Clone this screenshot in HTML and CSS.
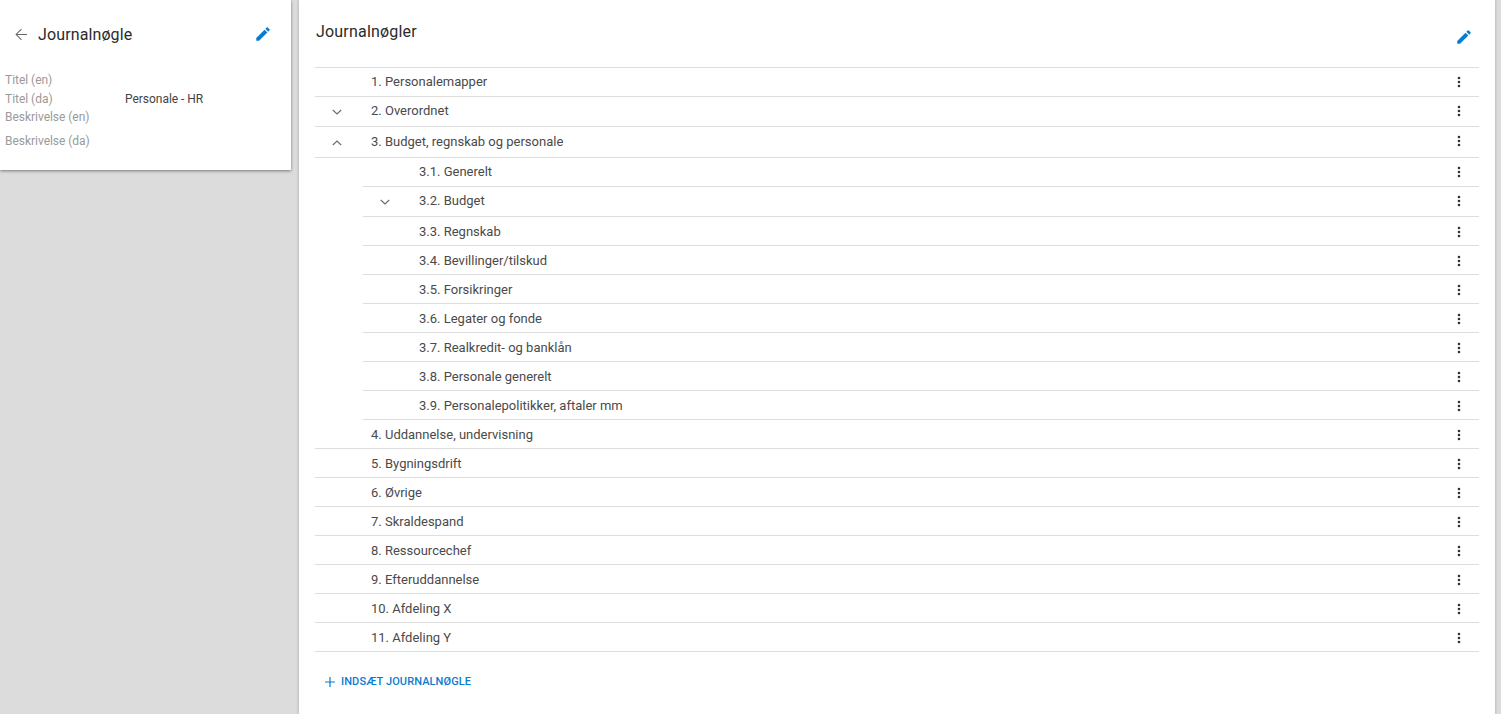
FILE: index.html
```html
<!DOCTYPE html>
<html lang="en">
<head>
  <meta charset="UTF-8">
  <title>Journalnøgler</title>
  <link rel="stylesheet" href="styles.css">
</head>
<body>
<svg class="defs" width="0" height="0">
  <symbol id="edit" viewBox="0 0 24 24"><path d="M3 17.25V21h3.75L17.81 9.94l-3.75-3.75L3 17.25zM20.71 7.04a1 1 0 0 0 0-1.41l-2.34-2.34a1 1 0 0 0-1.41 0l-1.83 1.83 3.75 3.75 1.83-1.83z"/></symbol>
  <symbol id="more" viewBox="0 0 24 24"><path d="M12 8a2 2 0 1 0 0-4 2 2 0 0 0 0 4zm0 2a2 2 0 1 0 0 4 2 2 0 0 0 0-4zm0 6a2 2 0 1 0 0 4 2 2 0 0 0 0-4z"/></symbol>
  <symbol id="down" viewBox="0 0 10 6"><path d="M.8 1l4.2 4 4.2-4" fill="none" stroke="currentColor" stroke-width="1.15"/></symbol>
  <symbol id="up" viewBox="0 0 10 6"><path d="M.8 5l4.2-4 4.2 4" fill="none" stroke="currentColor" stroke-width="1.15"/></symbol>
</svg>

<div class="layout">
  <aside class="side">
    <div class="side-head">
      <svg class="back" viewBox="0 0 14 14"><path d="M13 7H1.5M7 1.2L1.2 7 7 12.8" fill="none" stroke="currentColor" stroke-width="1.1"/></svg>
      <h2>Journalnøgle</h2>
      <svg class="edit"><use href="#edit"/></svg>
    </div>
    <dl class="props">
      <div class="prop"><dt>Titel (en)</dt><dd></dd></div>
      <div class="prop"><dt>Titel (da)</dt><dd>Personale - HR</dd></div>
      <div class="prop"><dt>Beskrivelse (en)</dt><dd></dd></div>
      <div class="prop prop-last"><dt>Beskrivelse (da)</dt><dd></dd></div>
    </dl>
  </aside>

  <main class="main">
    <div class="main-head">
      <h1>Journalnøgler</h1>
      <svg class="edit"><use href="#edit"/></svg>
    </div>

    <div class="tree">
      <div class="row"><span class="toggle"></span><span class="label">1. Personalemapper</span><svg class="more"><use href="#more"/></svg></div>
      <div class="row row-30"><span class="toggle"><svg class="chev"><use href="#down"/></svg></span><span class="label">2. Overordnet</span><svg class="more"><use href="#more"/></svg></div>
      <div class="row row-31"><span class="toggle"><svg class="chev"><use href="#up"/></svg></span><span class="label">3. Budget, regnskab og personale</span><svg class="more"><use href="#more"/></svg></div>
      <div class="sub">
        <div class="row"><span class="toggle"></span><span class="label">3.1. Generelt</span><svg class="more"><use href="#more"/></svg></div>
        <div class="row row-30"><span class="toggle"><svg class="chev"><use href="#down"/></svg></span><span class="label">3.2. Budget</span><svg class="more"><use href="#more"/></svg></div>
        <div class="row"><span class="toggle"></span><span class="label">3.3. Regnskab</span><svg class="more"><use href="#more"/></svg></div>
        <div class="row"><span class="toggle"></span><span class="label">3.4. Bevillinger/tilskud</span><svg class="more"><use href="#more"/></svg></div>
        <div class="row"><span class="toggle"></span><span class="label">3.5. Forsikringer</span><svg class="more"><use href="#more"/></svg></div>
        <div class="row"><span class="toggle"></span><span class="label">3.6. Legater og fonde</span><svg class="more"><use href="#more"/></svg></div>
        <div class="row"><span class="toggle"></span><span class="label">3.7. Realkredit- og banklån</span><svg class="more"><use href="#more"/></svg></div>
        <div class="row"><span class="toggle"></span><span class="label">3.8. Personale generelt</span><svg class="more"><use href="#more"/></svg></div>
        <div class="row"><span class="toggle"></span><span class="label">3.9. Personalepolitikker, aftaler mm</span><svg class="more"><use href="#more"/></svg></div>
      </div>
      <div class="row"><span class="toggle"></span><span class="label">4. Uddannelse, undervisning</span><svg class="more"><use href="#more"/></svg></div>
      <div class="row"><span class="toggle"></span><span class="label">5. Bygningsdrift</span><svg class="more"><use href="#more"/></svg></div>
      <div class="row"><span class="toggle"></span><span class="label">6. Øvrige</span><svg class="more"><use href="#more"/></svg></div>
      <div class="row"><span class="toggle"></span><span class="label">7. Skraldespand</span><svg class="more"><use href="#more"/></svg></div>
      <div class="row"><span class="toggle"></span><span class="label">8. Ressourcechef</span><svg class="more"><use href="#more"/></svg></div>
      <div class="row"><span class="toggle"></span><span class="label">9. Efteruddannelse</span><svg class="more"><use href="#more"/></svg></div>
      <div class="row"><span class="toggle"></span><span class="label">10. Afdeling X</span><svg class="more"><use href="#more"/></svg></div>
      <div class="row"><span class="toggle"></span><span class="label">11. Afdeling Y</span><svg class="more"><use href="#more"/></svg></div>
    </div>

    <button class="add">
      <svg class="plus" viewBox="0 0 12 12"><path d="M6 1v10M1 6h10" fill="none" stroke="currentColor" stroke-width="1.2"/></svg>
      INDSÆT JOURNALNØGLE
    </button>
  </main>
</div>
</body>
</html>
```

FILE: styles.css
```css
html, body { margin:0; padding:0; height:100%; overflow:hidden; }
body { background:#dcdcdc; color:#333; font-family:Roboto, "Liberation Sans", sans-serif; font-size:12px; }
.defs { display:block; height:0; }
.layout { display:flex; align-items:flex-start; height:714px; }

/* Left panel */
.side { width:291px; height:170px; flex:none; background:#fff; box-shadow:0 1px 3px rgba(0,0,0,.45); box-sizing:border-box; }
.side-head { display:flex; align-items:center; height:68px; padding:0 19px 0 15px; }
.side-head h2 { margin:0 0 0 10px; flex:1; font-size:16px; font-weight:400; color:#2b2b2b; letter-spacing:.12px; }
.back { width:13px; height:13px; color:#666; }
.edit { width:18px; height:18px; fill:#0a7cd0; flex:none; }
.props { margin:3px 0 0; padding:0 0 0 5px; color:#9a9a9a; }
.prop { display:flex; height:18.5px; line-height:18px; letter-spacing:-.03px; }
.prop-last { margin-top:5px; }
.prop dt { width:120px; flex:none; }
.prop dd { margin:0; color:#444; }

/* Main panel */
.main { width:1196px; height:714px; flex:none; margin-left:8px; background:#fff; box-shadow:0 0 3px rgba(0,0,0,.25); box-sizing:border-box; padding:0 16px; }
.main-head { display:flex; justify-content:space-between; height:67px; }
.main-head h1 { margin:22px 0 0 1px; font-size:16px; font-weight:400; color:#2b2b2b; letter-spacing:.2px; line-height:19px; }
.main-head .edit { margin:28px 6px 0 0; }

/* Tree */
.tree { border-top:1px solid #dedede; }
.row { display:flex; align-items:center; height:28px; border-bottom:1px solid #dedede; }
.row-30 { height:27px; padding-bottom:2px; }
.row-31 { height:28px; padding-bottom:2px; }
.sub .row:nth-child(n+3), .sub ~ .row { height:26px; padding-top:2px; }
.toggle { width:44px; margin-right:12px; flex:none; display:flex; justify-content:center; color:#6c6c6c; }
.chev { width:10px; height:6px; margin-top:3px; }
.label { flex:1; font-size:13px; color:#4a4a4a; margin-top:-2px; }
.row-30 .label { margin-top:-1px; }
.row-31 .label { margin-top:0; }
.more { width:16px; height:16px; fill:#333; margin-right:12.5px; flex:none; }
.sub { margin-left:48px; }

/* Add button */
.add { display:flex; align-items:center; margin:23px 0 0 9px; padding:0; background:none; border:0; font:500 11px Roboto, "Liberation Sans", sans-serif; letter-spacing:.1px; color:#0a7cd0; }
.plus { width:12px; height:12px; margin-right:5px; }
```
